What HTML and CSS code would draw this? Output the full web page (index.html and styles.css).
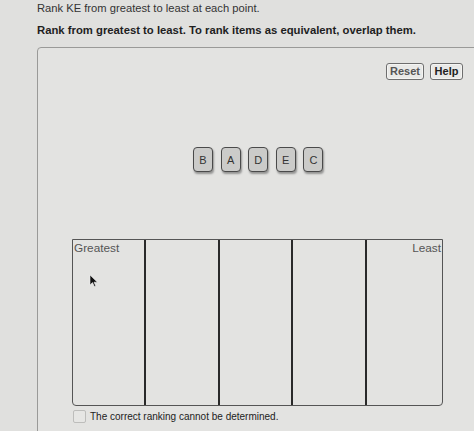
FILE: index.html
```html
<!DOCTYPE html>
<html>
<head>
<meta charset="utf-8">
<link rel="stylesheet" href="styles.css">
</head>
<body>
<div class="page">
  <p class="prompt">Rank KE from greatest to least at each point.</p>
  <p class="instr">Rank from greatest to least. To rank items as equivalent, overlap them.</p>
  <div class="panel">
    <div class="toolbar">
      <button class="btn reset">Reset</button>
      <button class="btn help">Help</button>
    </div>
    <div class="tiles">
      <div class="tile">B</div>
      <div class="tile">A</div>
      <div class="tile">D</div>
      <div class="tile">E</div>
      <div class="tile">C</div>
    </div>
    <div class="rank">
      <div class="col first"><span class="lbl">Greatest</span></div>
      <div class="col"></div>
      <div class="col"></div>
      <div class="col"></div>
      <div class="col last"><span class="lbl right">Least</span></div>
      <svg class="cursor" width="10" height="14" viewBox="0 0 10 14"><path d="M1 1 L1 11 L3.5 8.6 L5.4 12.6 L6.8 12 L5 8.2 L8.4 8.2 Z" fill="#111" stroke="#eee" stroke-width="0.6"/></svg>
    </div>
    <label class="cant"><span class="box"></span>The correct ranking cannot be determined.</label>
  </div>
</div>
</body>
</html>
```
FILE: styles.css
```css
html, body {
  margin: 0;
  padding: 0;
  background: #e0e0de;
  overflow: hidden;
}
.page {
  width: 474px;
  height: 431px;
  padding-left: 37px;
  box-sizing: border-box;
  font-family: "Liberation Sans", Arial, sans-serif;
  color: #262626;
}
.prompt {
  margin: 0;
  padding-top: 1px;
  font-size: 11.2px;
  line-height: 14px;
  color: #333;
}
.instr {
  margin: 8px 0 0 0;
  font-size: 11.3px;
  line-height: 14px;
  font-weight: bold;
  color: #1e1e1e;
}
.panel {
  margin-top: 10px;
  width: 460px;
  height: 400px;
  border: 1px solid #9a9a98;
  border-radius: 4px;
  background: #e3e3e1;
  box-sizing: border-box;
}
.toolbar {
  display: flex;
  gap: 6px;
  padding: 15px 0 0 348px;
}
.btn {
  height: 17px;
  padding: 0;
  border: 1px solid #6e6e6e;
  border-radius: 3px;
  background: #e9e9e7;
  font-family: "Liberation Sans", Arial, sans-serif;
  font-size: 11px;
  font-weight: bold;
  line-height: 15px;
  box-shadow: inset 0 0 0 1px #f4f4f2;
}
.reset { width: 38px; color: #555; }
.help { width: 33px; color: #222; }
.tiles {
  display: flex;
  gap: 7.6px;
  padding: 67px 0 0 155px;
}
.tile {
  width: 20px;
  height: 25px;
  box-sizing: border-box;
  border: 1.5px solid #4a4a4a;
  border-radius: 4px;
  background: #cbcbc9;
  font-size: 11px;
  color: #333;
  display: flex;
  align-items: center;
  justify-content: center;
  box-shadow: 1px 2px 2px rgba(0,0,0,0.35);
}
.rank {
  position: relative;
  margin: 67px 0 0 34px;
  width: 371px;
  height: 167px;
  display: grid;
  grid-template-columns: 71px 74px 73px 74px 1fr;
  border: 1.5px solid #555;
  border-radius: 0 0 4px 4px;
  box-sizing: border-box;
}
.col {
  border-left: 2px solid #2a2a2a;
  position: relative;
}
.col.first { border-left: none; }
.lbl {
  position: absolute;
  top: 1px;
  left: 1px;
  font-size: 11.8px;
  color: #555;
}
.lbl.right { left: auto; right: 1px; }
.cursor {
  position: absolute;
  left: 16px;
  top: 34px;
}
.cant {
  display: flex;
  align-items: center;
  gap: 4px;
  margin: 4px 0 0 35px;
  font-size: 10px;
  color: #222;
}
.box {
  width: 11px;
  height: 11px;
  border: 1px solid #bdbdbb;
  border-radius: 2px;
  background: #e6e6e4;
}
```
